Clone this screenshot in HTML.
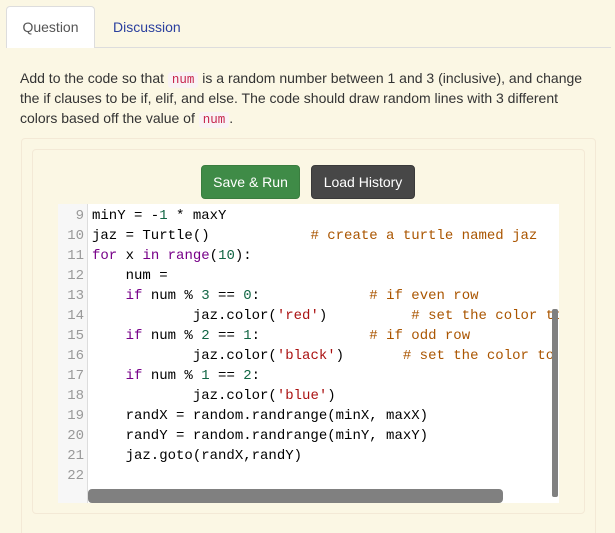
<!DOCTYPE html>
<html><head><meta charset="utf-8"><style>
*{margin:0;padding:0;box-sizing:border-box}
html,body{width:615px;height:533px;overflow:hidden}
body{background:#fbf7e4;font-family:"Liberation Sans",Arial,sans-serif;position:relative;color:#333}
.tabline{position:absolute;left:6px;top:47px;width:605px;height:1px;background:#ddd}
.tab1{position:absolute;left:6px;top:6px;width:89px;height:42px;background:#fff;border:1px solid #ddd;border-bottom:none;border-radius:4px 4px 0 0;font-size:14px;color:#555;text-align:center;line-height:40px}
.tab2{position:absolute;left:113px;top:6px;font-size:14px;color:#2a3f9e;line-height:42px}
.p{position:absolute;left:20px;top:68px;width:568px;font-size:14px;line-height:20px;color:#333}
code{font-family:"Liberation Mono",monospace;font-size:12.5px;line-height:14px;display:inline-block;color:#c7254e;background:#f9f2f4;padding:1px 4px;border-radius:3px}
.outer{position:absolute;left:21px;top:138px;width:575px;height:420px;border:1px solid #f3e9d6;border-radius:4px}
.inner{position:absolute;left:32px;top:149px;width:553px;height:365px;border:1px solid #f3e9d6;border-radius:4px}
.btn{position:absolute;top:165px;height:34px;color:#fff;font-size:14px;line-height:32px;text-align:center;border-radius:4px}
.b1{left:201px;width:99px;background:#3f8b47;border:1px solid #3a7d3f}
.b2{left:311px;width:104px;background:#474747;border:1px solid #3a3a3a}
.gut{position:absolute;left:58px;top:204px;width:30px;height:299px;background:#f7f7f7;border-right:1px solid #ddd}
.code{position:absolute;left:88px;top:204px;width:471px;height:299px;background:#fff;overflow:hidden}
pre{font-family:"Liberation Mono",monospace;font-size:14px;line-height:20px;position:absolute}
.ln{left:58px;top:206px;width:26px;text-align:right;color:#999;position:absolute}
.src{left:4px;top:2px;color:#000}
.k{color:#708}.n{color:#164}.s{color:#a11}.c{color:#a50}
.hs{position:absolute;left:88px;top:489px;width:415px;height:14px;background:#808080;border-radius:4px}
.vs{position:absolute;left:552px;top:309px;width:6px;height:188px;background:#808080;border-radius:2px}
</style></head><body>
<div class="tabline"></div>
<div class="tab1">Question</div>
<div class="tab2">Discussion</div>
<div class="p">Add to the code so that <code>num</code> is a random number between 1 and 3 (inclusive), and change the if clauses to be if, elif, and else. The code should draw random lines with 3 different colors based off the value of <code>num</code>.</div>
<div class="outer"></div><div class="inner"></div>
<div class="btn b1">Save &amp; Run</div>
<div class="btn b2">Load History</div>
<div class="gut"></div>
<pre class="ln">9
10
11
12
13
14
15
16
17
18
19
20
21
22</pre>
<div class="code"><pre class="src">minY = -<span class="n">1</span> * maxY
jaz = Turtle()            <span class="c"># create a turtle named jaz</span>
<span class="k">for</span> x <span class="k">in</span> <span class="k">range</span>(<span class="n">10</span>):
    num =
    <span class="k">if</span> num % <span class="n">3</span> == <span class="n">0</span>:             <span class="c"># if even row</span>
            jaz.color(<span class="s">'red'</span>)          <span class="c"># set the color to red</span>
    <span class="k">if</span> num % <span class="n">2</span> == <span class="n">1</span>:             <span class="c"># if odd row</span>
            jaz.color(<span class="s">'black'</span>)       <span class="c"># set the color to black</span>
    <span class="k">if</span> num % <span class="n">1</span> == <span class="n">2</span>:
            jaz.color(<span class="s">'blue'</span>)
    randX = random.randrange(minX, maxX)
    randY = random.randrange(minY, maxY)
    jaz.goto(randX,randY)
</pre></div>
<div class="hs"></div><div class="vs"></div>
</body></html>
